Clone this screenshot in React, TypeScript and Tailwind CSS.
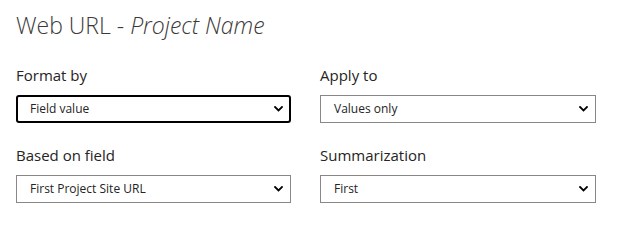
const Chevron = () => (
  <svg width="9" height="6" viewBox="0 0 9 6" className="shrink-0">
    <path d="M1 1 L4.5 4.5 L8 1" fill="none" stroke="#000" strokeWidth="1.8" strokeLinecap="square" />
  </svg>
);

type FieldProps = { label: string; value: string; focused?: boolean };

const Field = ({ label, value, focused }: FieldProps) => (
  <div className="flex flex-col">
    <div className="text-[15px] leading-[20px] text-[#252423] h-[20px]">{label}</div>
    <div
      className={
        focused
          ? "mt-[10px] h-[28px] flex items-center justify-between pl-[12px] pr-[6px] border-2 border-black rounded-[3px] bg-white"
          : "mt-[10px] h-[28px] flex items-center justify-between pl-[13px] pr-[7px] border border-[#8a8886] bg-white"
      }
    >
      <span className="text-[12px] text-[#252423]">{value}</span>
      <Chevron />
    </div>
  </div>
);

export default function App() {
  const fields = [
    { label: "Format by", value: "Field value", focused: true },
    { label: "Apply to", value: "Values only" },
    { label: "Based on field", value: "First Project Site URL" },
    { label: "Summarization", value: "First" },
  ];

  return (
    <div
      className="w-[644px] h-[240px] bg-white pl-[16px] pt-[10px]"
      style={{ fontFamily: '"Open Sans", "Noto Sans", sans-serif' }}
    >
      <h1 className="text-[23px] leading-[30px] font-light text-[#3b3a39]">
        Web URL - <span className="italic">Project Name</span>
      </h1>
      <div className="mt-[25px] grid grid-cols-[275px_276px] gap-x-[29px] gap-y-[22px]">
        {fields.map((f, i) => (
          <Field key={i} label={f.label} value={f.value} focused={f.focused} />
        ))}
      </div>
    </div>
  );
}
